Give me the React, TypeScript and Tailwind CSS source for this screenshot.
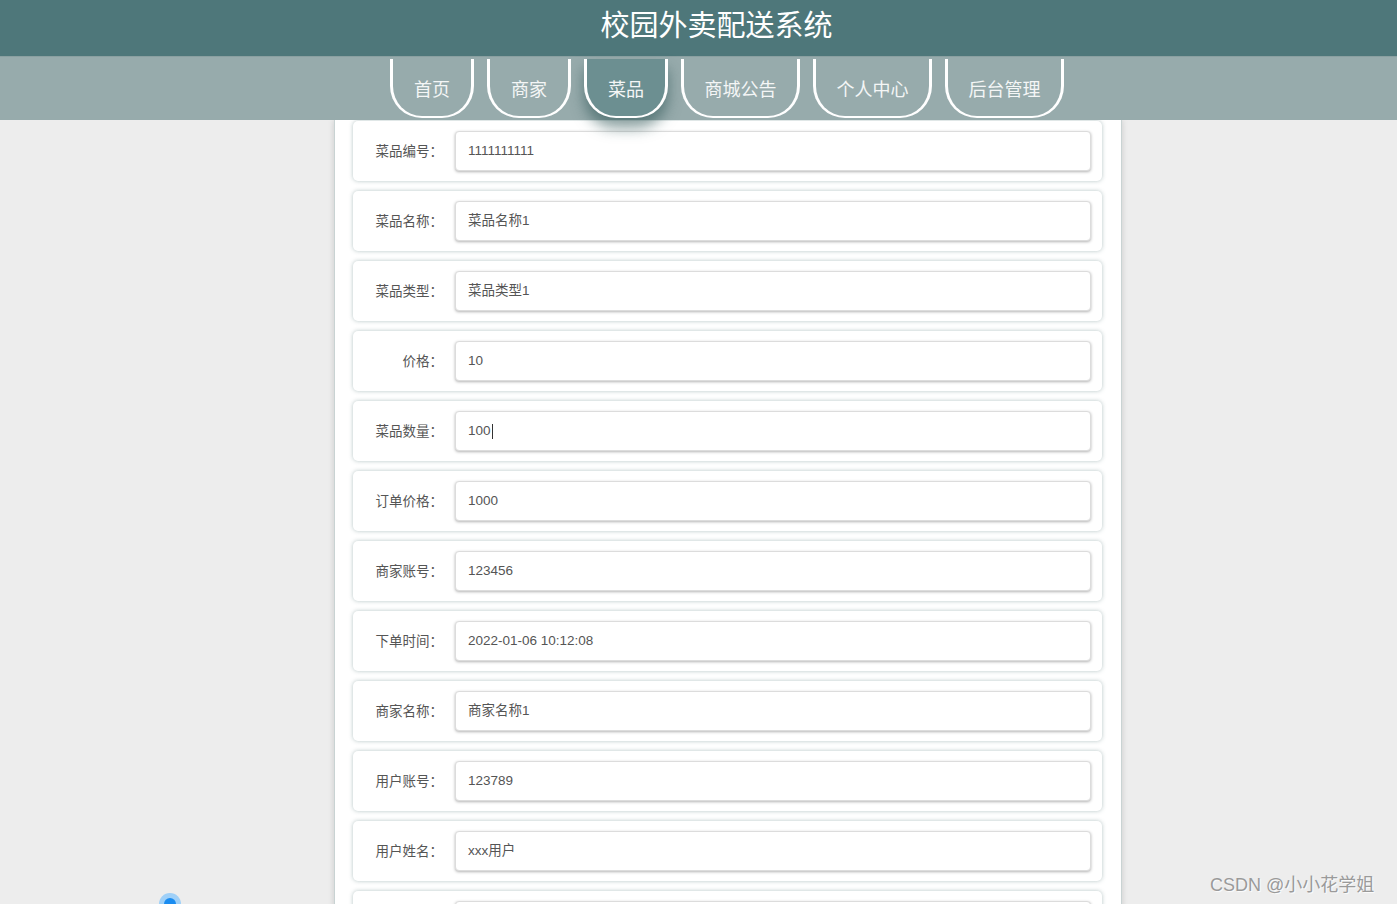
import React from "react";

const tabs = ["首页", "商家", "菜品", "商城公告", "个人中心", "后台管理"];

const rows: [string, string][] = [
  ["菜品编号", "1111111111"],
  ["菜品名称", "菜品名称1"],
  ["菜品类型", "菜品类型1"],
  ["价格", "10"],
  ["菜品数量", "100"],
  ["订单价格", "1000"],
  ["商家账号", "123456"],
  ["下单时间", "2022-01-06 10:12:08"],
  ["商家名称", "商家名称1"],
  ["用户账号", "123789"],
  ["用户姓名", "xxx用户"],
  ["", ""],
];

export default function App() {
  return (
    <div
      className="relative h-[904px] overflow-hidden bg-[#ededed]"
      style={{ fontFamily: '"Liberation Sans", "Noto Sans CJK SC", sans-serif' }}
    >
      <div className="h-[56px] bg-[#4e777a] flex items-center justify-center pl-[36px] pb-[10px]">
        <h1 className="text-[29px] text-white tracking-[0px] leading-none" style={{ fontFamily: '"Noto Sans CJK SC", sans-serif' }}>
          校园外卖配送系统
        </h1>
      </div>
      <div className="relative z-10 h-[64px] bg-[#97abac] border-t border-[#8aa0a1] flex pl-[390px] gap-[13px]">
        {tabs.map((t, i) => (
          <div
            key={t}
            className={
              "h-[59px] mt-[2px] flex items-center justify-center border-x-[3px] border-b-[2px] border-t-0 border-white rounded-b-[32px] text-[18px] text-[#f4f6f6] " +
              (t.length > 2 ? "w-[119px] " : "w-[84px] ") +
              (i === 2
                ? "bg-[#6c8f91] shadow-[0_10px_14px_rgba(40,80,80,0.55)]"
                : "")
            }
            style={{ fontFamily: '"Noto Sans CJK SC", sans-serif' }}
          >
            <span className="mt-[1px]">{t}</span>
          </div>
        ))}
      </div>
      <div className="ml-[334px] w-[788px] bg-white border-x border-[#c9d3d3] shadow-[0_0_6px_rgba(0,0,0,0.15)] pl-[18px] pr-[19px] pt-[1px] flex flex-col gap-[10px]">
        {rows.map(([label, value], i) => (
          <div
            key={i}
            className="h-[60px] bg-white rounded-[5px] shadow-[0_0_4px_rgba(90,125,125,0.45)] flex items-center pr-[11px]"
          >
            <div className="w-[90px] text-right text-[13.5px] text-[#555] pr-0 mt-[-1px]" style={{ fontFamily: '"Noto Sans CJK SC", sans-serif' }}>
              {label ? label + "：" : ""}
            </div>
            <div className="ml-[12px] flex-1 h-[40px] bg-white border border-[#dcdcdc] rounded-[4px] shadow-[0_1px_3px_rgba(0,0,0,0.3)] flex items-center pl-[12px] text-[13.5px] text-[#555]">
              <span style={{ fontFamily: '"Liberation Sans", "Noto Sans CJK SC", sans-serif' }}>{value}</span>
              {label === "菜品数量" && <span className="w-px h-[15px] bg-[#333] ml-[1px]" />}
            </div>
          </div>
        ))}
      </div>
      <div className="absolute left-[159px] top-[893px] w-[22px] h-[22px] rounded-full bg-[#9fd0f8] flex items-center justify-center">
        <div className="w-[12px] h-[12px] rounded-full bg-[#1a8cf0]" />
      </div>
      <div
        className="absolute left-[1210px] top-[872px] text-[18px] text-[#9a9a9a] whitespace-nowrap"
        style={{ fontFamily: '"Liberation Sans", "Noto Sans CJK SC", sans-serif', textShadow: "1px 1px 1px rgba(255,255,255,0.9)" }}
      >
        CSDN @小小花学姐
      </div>
    </div>
  );
}
